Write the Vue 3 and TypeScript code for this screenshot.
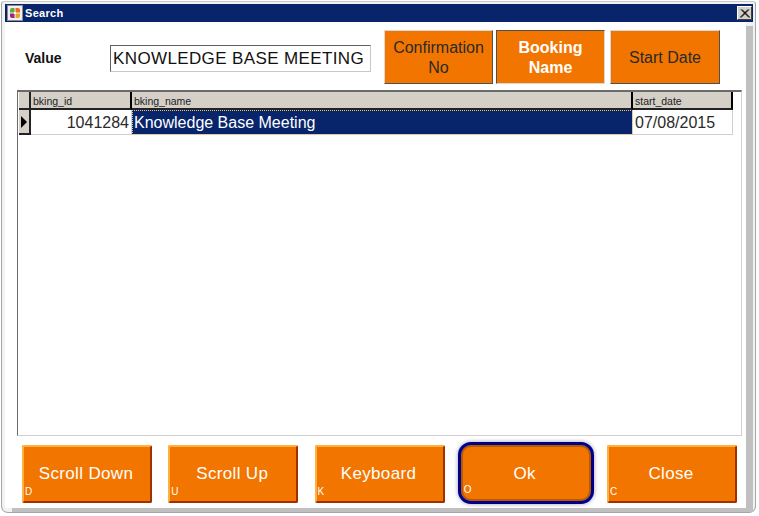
<script setup lang="ts">
interface Btn { label: string; key: string; focus?: boolean }
const sortButtons = [
  { label: 'Confirmation No', cls: 'raised' },
  { label: 'Booking Name', cls: 'sunken' },
  { label: 'Start Date', cls: 'raised wide' },
]
const actions: Btn[] = [
  { label: 'Scroll Down', key: 'D' },
  { label: 'Scroll Up', key: 'U' },
  { label: 'Keyboard', key: 'K' },
  { label: 'Ok', key: 'O', focus: true },
  { label: 'Close', key: 'C' },
]
</script>

<template>
  <div class="frame">
    <div class="window">
      <header class="titlebar">
        <svg class="appicon" width="16" height="16" viewBox="0 0 16 16">
          <rect x="0.5" y="0.5" width="15" height="15" fill="#f0f0f0" stroke="#8c8c8c" />
          <path d="M3 7.5 V5 Q3 3 5 3 H7.5 V7.5 Z" fill="#5cae3c" />
          <path d="M8.5 3 H11 Q13 3 13 5 V7.5 H8.5 Z" fill="#ec6a1e" />
          <path d="M3 8.5 H7.5 V13 H5 Q3 13 3 11 Z" fill="#a3237f" />
          <path d="M8.5 8.5 H13 V11 Q13 13 11 13 H8.5 Z" fill="#eda422" />
          <rect x="7" y="7" width="2" height="2" fill="#fff" />
        </svg>
        <span class="title">Search</span>
        <span class="closebox">
          <svg width="10" height="9" viewBox="0 0 10 9">
            <path d="M1 0.5 L9 8.5 M2 0.5 L10 8.5 M8 0.5 L0 8.5 M9 0.5 L1 8.5" stroke="#000" stroke-width="1" fill="none" />
          </svg>
        </span>
      </header>

      <div class="body">
        <div class="search">
          <label class="label">Value</label>
          <div class="input">KNOWLEDGE BASE MEETING</div>
          <div class="sort">
            <div v-for="b in sortButtons" :key="b.label" class="sortbtn" :class="b.cls">{{ b.label }}</div>
          </div>
        </div>

        <div class="grid">
          <div class="row headrow">
            <div class="indicator"></div>
            <div class="cell idcol">bking_id</div>
            <div class="cell namecol">bking_name</div>
            <div class="cell datecol">start_date</div>
          </div>
          <div class="row datarow">
            <div class="indicator"><span class="arrow"></span></div>
            <div class="cell idcol num">1041284</div>
            <div class="cell namecol selected">Knowledge Base Meeting</div>
            <div class="cell datecol">07/08/2015</div>
          </div>
        </div>

        <div class="actions">
          <div v-for="a in actions" :key="a.label" class="action" :class="{ focus: a.focus }">
            {{ a.label }}
            <span class="hotkey">{{ a.key }}</span>
          </div>
        </div>
      </div>
    </div>
  </div>
</template>

<style>
html, body { margin: 0; background: #fff; }
</style>

<style scoped>
.frame {
  width: 759px;
  height: 516px;
  box-sizing: border-box;
  padding: 1px 3px 3px 1px;
  background: #fff;
  font-family: "Liberation Sans", Arial, sans-serif;
}
.window {
  height: 100%;
  box-sizing: border-box;
  display: flex;
  flex-direction: column;
  background: #f2f2f2;
  border: 1px solid #a6a6a6;
  border-top-color: #c8c8c8;
  border-radius: 3px 3px 7px 7px;
  padding: 2px 0 0 3px;
}
.titlebar {
  height: 18px;
  margin-right: 2px;
  flex: none;
  display: flex;
  align-items: center;
  gap: 2px;
  padding: 0 1px 0 2px;
  background: #08246b;
  color: #fff;
}
.appicon { flex: none; }
.title { font-size: 11px; font-weight: 700; letter-spacing: 0.3px; flex: 1; }
.closebox {
  width: 15px;
  height: 14px;
  display: flex;
  align-items: center;
  justify-content: center;
  box-sizing: border-box;
  background: #d4d0c8;
  border: 1px solid;
  border-color: #fff #404040 #404040 #fff;
}
.body {
  flex: 1;
  min-height: 0;
  margin-right: 9px;
  margin-bottom: 4px;
  background: #fff;
  box-shadow: 7px 4px 0 #c0c0c0;
  display: flex;
  flex-direction: column;
  padding: 0 4px 0 12px;
}
.search {
  height: 68px;
  flex: none;
  display: flex;
  align-items: flex-start;
}
.label {
  width: 85px;
  margin: 28px 0 0 8px;
  font-size: 14px;
  line-height: 16px;
  font-weight: 700;
  color: #111;
}
.input {
  width: 261px;
  height: 27px;
  margin-top: 23px;
  box-sizing: border-box;
  border: 1px solid;
  border-color: #606060 #c8c8c8 #c8c8c8 #606060;
  font-size: 17px;
  letter-spacing: 0.38px;
  line-height: 25px;
  padding-left: 2px;
  white-space: nowrap;
  overflow: hidden;
  color: #111;
}
.sort {
  display: flex;
  gap: 3px;
  margin: 8px 0 0 13px;
}
.sortbtn {
  width: 109px;
  height: 54px;
  padding-top: 1px;
  box-sizing: border-box;
  background: #f27500;
  display: flex;
  align-items: center;
  justify-content: center;
  text-align: center;
  font-size: 16px;
  line-height: 20px;
  color: #2a2a2a;
  border: 1px solid;
}
.sortbtn.raised { border-color: #d8d8d8 #505050 #505050 #d8d8d8; }
.sortbtn.wide { width: 110px; margin-left: 2px; }
.sortbtn.sunken {
  color: #fff;
  font-weight: 700;
  border-color: #505050 #d8d8d8 #d8d8d8 #505050;
}
.grid {
  flex: 1;
  min-height: 0;
  box-sizing: border-box;
  border: 1px solid;
  border-top-width: 2px;
  border-color: #6a6a6a #d0d0d0 #d0d0d0 #6a6a6a;
  background: #fff;
  padding-left: 1px;
}
.row { display: flex; }
.indicator {
  width: 12px;
  flex: none;
  box-sizing: border-box;
  background: #d4d0c8;
  border-right: 2px solid #222;
  border-bottom: 2px solid #222;
  display: flex;
  align-items: center;
  justify-content: center;
}
.arrow {
  width: 0;
  height: 0;
  border-left: 6px solid #000;
  border-top: 6px solid transparent;
  border-bottom: 6px solid transparent;
}
.cell {
  box-sizing: border-box;
  flex: none;
  white-space: nowrap;
  overflow: hidden;
  padding: 0 2px;
  border-right: 1px solid #000;
}
.idcol { width: 101px; }
.namecol { width: 501px; }
.datecol { width: 100px; }
.headrow { height: 18px; }
.headrow .cell {
  background: #d4d0c8;
  font-size: 10.5px;
  line-height: 18px;
  border-right-width: 2px;
  border-bottom: 2px solid #222;
  color: #222;
}
.datarow { height: 25px; }
.datarow .cell {
  font-size: 16px;
  line-height: 25px;
  color: #2a2a2a;
  border-right: 1px solid #d0d0d0;
  border-bottom: 1px solid #d0d0d0;
}
.datarow .num { text-align: right; }
.datarow .selected {
  background: #08246b;
  color: #fff;
  outline: 1px dotted #e8c878;
  outline-offset: -1px;
}
.actions {
  height: 72px;
  flex: none;
  display: flex;
  justify-content: space-between;
  align-items: flex-start;
  padding: 9px 5px 0 5px;
  box-sizing: border-box;
}
.action {
  position: relative;
  width: 130px;
  height: 58px;
  padding-right: 2px;
  box-sizing: border-box;
  background: #f27500;
  border: 2px solid;
  border-color: #ffb040 #a03000 #a03000 #ffb040;
  border-radius: 2px;
  color: #fff;
  font-size: 17px;
  letter-spacing: 0.35px;
  display: flex;
  align-items: center;
  justify-content: center;
}
.action.focus {
  height: 56px;
  padding-top: 1px;
  border-color: #b85a00;
  border-radius: 10px;
  outline: 3px solid #00008b;
  box-shadow: 0 0 4px 3px rgba(0, 0, 60, 0.4);
}
.hotkey {
  position: absolute;
  left: 1px;
  bottom: 3px;
  font-size: 10px;
  line-height: 12px;
  letter-spacing: 0;
}
</style>
